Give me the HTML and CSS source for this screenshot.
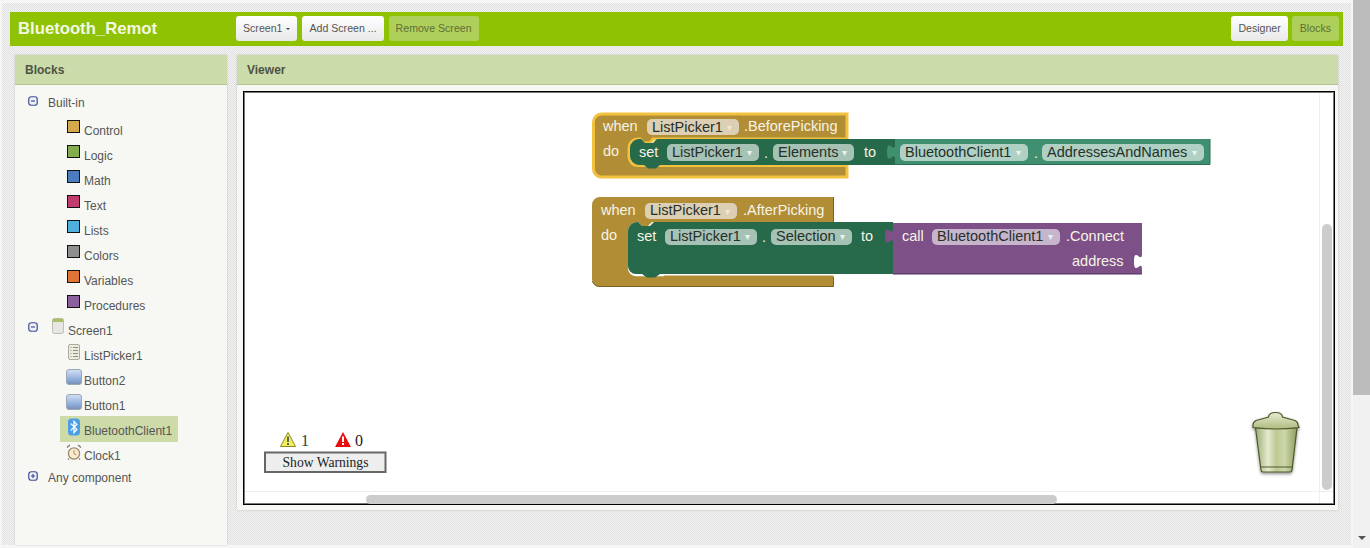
FILE: index.html
```html
<!DOCTYPE html>
<html lang="en">
<head>
<meta charset="UTF-8" />
<title>Bluetooth_Remot - Blocks</title>
<link rel="stylesheet" href="styles.css">
</head>
<body>
<div class="app">
<div class="page">
  <div class="topbar">
    <div class="project">Bluetooth_Remot</div>
    <div class="btn-group">
      <div class="btn">Screen1<span class="caret"></span></div>
      <div class="btn">Add Screen ...</div>
      <div class="btn btn-off">Remove Screen</div>
    </div>
    <div class="btn-group view-switch">
      <div class="btn">Designer</div>
      <div class="btn btn-off btn-blocks">Blocks</div>
    </div>
  </div>

  <div class="workarea">
    <div class="panel tree-panel">
      <div class="panel-head">Blocks</div>
      <div class="tree">
        <div class="row row-top">
          <svg class="toggle" viewBox="0 0 10 10"><rect x="0.75" y="0.75" width="8.5" height="8.5" rx="2.5"/><path d="M3 5h4"/></svg>
          <span>Built-in</span>
        </div>
        <div class="row row-first row-child"><i class="swatch s-control"></i><span>Control</span></div>
        <div class="row row-child"><i class="swatch s-logic"></i><span>Logic</span></div>
        <div class="row row-child"><i class="swatch s-math"></i><span>Math</span></div>
        <div class="row row-child"><i class="swatch s-text"></i><span>Text</span></div>
        <div class="row row-child"><i class="swatch s-lists"></i><span>Lists</span></div>
        <div class="row row-child"><i class="swatch s-colors"></i><span>Colors</span></div>
        <div class="row row-child"><i class="swatch s-variables"></i><span>Variables</span></div>
        <div class="row row-child"><i class="swatch s-procedures"></i><span>Procedures</span></div>
        <div class="row row-screen">
          <svg class="toggle" viewBox="0 0 10 10"><rect x="0.75" y="0.75" width="8.5" height="8.5" rx="2.5"/><path d="M3 5h4"/></svg>
          <svg class="icon-screen" width="12" height="16" viewBox="0 0 12 16">
            <rect x="0.5" y="0.5" width="11" height="15" rx="2" fill="#e6e6e2" stroke="#bdbdb6"/>
            <path d="M0.5 4V2.5a2 2 0 0 1 2-2h7a2 2 0 0 1 2 2V4z" fill="#a9bf6c"/>
          </svg>
          <span>Screen1</span>
        </div>
        <div class="row row-child">
          <svg class="icon" width="16" height="16" viewBox="0 0 16 16">
            <rect x="2.5" y="0.5" width="11" height="15" rx="1.5" fill="#ecebdf" stroke="#a9a99c"/>
            <path d="M4.5 3.5h1M4.5 6.5h1M4.5 9.5h1M4.5 12.5h1" stroke="#8aa05c"/>
            <path d="M7 3.5h5M7 6.5h5M7 9.5h5M7 12.5h5" stroke="#8f8f86"/>
          </svg>
          <span>ListPicker1</span>
        </div>
        <div class="row row-child">
          <svg class="icon" width="16" height="16" viewBox="0 0 16 16"><use href="#btn-icon"/></svg>
          <span>Button2</span>
        </div>
        <div class="row row-child">
          <svg class="icon" width="16" height="16" viewBox="0 0 16 16">
            <defs>
              <linearGradient id="btn-fill" x1="0" y1="0" x2="0" y2="1">
                <stop offset="0" stop-color="#d3e0f2"/><stop offset="0.75" stop-color="#86a6d6"/><stop offset="1" stop-color="#7d8ca6"/>
              </linearGradient>
              <g id="btn-icon"><rect x="0.5" y="0.5" width="15" height="15" rx="2.5" fill="url(#btn-fill)" stroke="#9aa7ba"/></g>
            </defs>
            <use href="#btn-icon"/>
          </svg>
          <span>Button1</span>
        </div>
        <div class="row row-child row-selected">
          <svg class="icon" width="16" height="18" viewBox="0 0 16 18">
            <rect x="2" y="0.5" width="12" height="17" rx="3.5" fill="#4a9fe6"/>
            <path d="M4.8 5.6 10.8 11.6 8 14.6V3.4L10.8 6.4 4.8 12.4" fill="none" stroke="#fff" stroke-width="1.3"/>
          </svg>
          <span>BluetoothClient1</span>
        </div>
        <div class="row row-child">
          <svg class="icon" width="16" height="16" viewBox="0 0 16 16">
            <circle cx="8" cy="9.5" r="5.6" fill="#f6ecd4" stroke="#9c8a66" stroke-width="1.3"/>
            <path d="M8 6.2v3.5l2.4 1.2" fill="none" stroke="#c08a3e"/>
            <path d="M1 3.4 4 1M15 3.4 12 1M3 14.5l-1 1M13 14.5l1 1" stroke="#777" stroke-width="1.3" fill="none"/>
          </svg>
          <span>Clock1</span>
        </div>
        <div class="row row-any">
          <svg class="toggle" viewBox="0 0 10 10"><rect x="0.75" y="0.75" width="8.5" height="8.5" rx="2.5"/><path d="M3 5h4M5 3v4"/></svg>
          <span>Any component</span>
        </div>
      </div>
    </div>

    <div class="panel viewer">
      <div class="panel-head">Viewer</div>
      <div class="viewer-body">
        <!-- viewBox is in page coordinates so the block numbers read off the screen directly -->
        <svg class="workspace" width="1090" height="412" viewBox="244 92 1090 412">
          <defs>
            <linearGradient id="can" x1="0" y1="0" x2="1" y2="0">
              <stop offset="0" stop-color="#9dab72"/><stop offset="0.3" stop-color="#e4ead0"/><stop offset="0.5" stop-color="#bcc993"/><stop offset="0.7" stop-color="#ccd7aa"/><stop offset="1" stop-color="#8d9c5e"/>
            </linearGradient>
            <linearGradient id="lid" x1="0" y1="0" x2="0" y2="1">
              <stop offset="0" stop-color="#e6edd2"/><stop offset="1" stop-color="#aebb80"/>
            </linearGradient>
            <filter id="soft" x="-20%" y="-20%" width="140%" height="140%"><feDropShadow dx="0" dy="1.5" stdDeviation="1.5" flood-color="#000" flood-opacity="0.45"/></filter>
          </defs>

          <!-- when ListPicker1.BeforePicking -->
          <path class="b-event b-selected" d="M593.5 122a8 8 0 0 1 8-8H847V139H653l-3 4h-7l-3-4h-2a9 9 0 0 0-9 9V156a9 9 0 0 0 9 9.500H847V177H601.500a8 8 0 0 1-8-8Z"/>
          <text class="t-light" x="603" y="131">when</text>
          <rect class="f-event" x="647" y="119" width="92" height="16" rx="5"/>
          <text class="t-field" x="652" y="131.500">ListPicker1</text>
          <text class="t-arrow a-event" x="727" y="131">▾</text>
          <text class="t-light" x="744" y="131">.BeforePicking</text>
          <text class="t-light" x="603" y="156">do</text>

          <path class="b-set" d="M630 148a9 9 0 0 1 9-9h2l4 4h8l4-4H895V165H660l-4 3.500h-8l-4-3.500H639a9 9 0 0 1-9-9Z"/>
          <text class="t-light" x="639" y="157">set</text>
          <rect class="f-set" x="667" y="144" width="92" height="17" rx="5"/>
          <text class="t-field" x="672" y="157">ListPicker1</text>
          <text class="t-arrow" x="747" y="156">▾</text>
          <text class="t-light" x="764" y="158">.</text>
          <rect class="f-set" x="773" y="144" width="81" height="17" rx="5"/>
          <text class="t-field" x="778" y="157">Elements</text>
          <text class="t-arrow" x="842" y="156">▾</text>
          <text class="t-light" x="864" y="157">to</text>

          <path class="b-value" d="M895 139H1210V165H895V159.500c0-10-8 8-8-7.500s8 2.500 8-7.500Z"/>
          <path class="edge-value" d="M895 164.500H1210V139"/>
          <rect class="f-value" x="900" y="144" width="128" height="17" rx="5"/>
          <text class="t-field" x="905" y="157">BluetoothClient1</text>
          <text class="t-arrow" x="1016" y="156">▾</text>
          <text class="t-light" x="1034" y="158">.</text>
          <rect class="f-value" x="1042" y="144" width="162" height="17" rx="5"/>
          <text class="t-field" x="1047" y="157">AddressesAndNames</text>
          <text class="t-arrow" x="1192" y="156">▾</text>

          <!-- when ListPicker1.AfterPicking -->
          <path class="b-event" d="M592 205a8 8 0 0 1 8-8H833.500V222H652l-4 4h-6l-4-4H637a9 9 0 0 0-9 9V267.500a8 8 0 0 0 8 8H833.500V287H600a8 8 0 0 1-8-8Z"/>
          <path class="edge-event" d="M592.500 281q1 5.500 8 5.500H833.500V277M833.500 222V197"/>
          <text class="t-light" x="601" y="215">when</text>
          <rect class="f-event" x="645" y="203" width="92" height="16" rx="5"/>
          <text class="t-field" x="650" y="215">ListPicker1</text>
          <text class="t-arrow a-event" x="725" y="215">▾</text>
          <text class="t-light" x="743" y="215">.AfterPicking</text>
          <text class="t-light" x="601" y="240">do</text>

          <path class="gap" d="M628.500 268a8 8 0 0 0 8 7.500H664"/>
          <path class="b-set" d="M628 231a9 9 0 0 1 9-9h1l4 4h8l4-4H893V274H660l-5 3.500h-8l-5-3.500H636a8 8 0 0 1-8-8Z"/>
          <text class="t-light" x="637" y="241">set</text>
          <rect class="f-set" x="665" y="229" width="92" height="16" rx="5"/>
          <text class="t-field" x="670" y="241">ListPicker1</text>
          <text class="t-arrow" x="745" y="240">▾</text>
          <text class="t-light" x="762" y="242">.</text>
          <rect class="f-set" x="771" y="229" width="81" height="16" rx="5"/>
          <text class="t-field" x="776" y="241">Selection</text>
          <text class="t-arrow" x="840" y="240">▾</text>
          <text class="t-light" x="861" y="241">to</text>

          <path class="b-call" d="M893 223H1142V274H893V243.500c0-10-8 8-8-7.500s8 2.500 8-7.500Z"/>
          <path class="edge-call" d="M893 274H1142"/>
          <text class="t-light" x="902" y="241">call</text>
          <rect class="f-call" x="932" y="229" width="128" height="16" rx="5"/>
          <text class="t-field" x="937" y="241">BluetoothClient1</text>
          <text class="t-arrow" x="1048" y="240">▾</text>
          <text class="t-light" x="1066" y="241">.Connect</text>
          <text class="t-light" x="1072" y="266">address</text>
          <path class="socket" d="M1142 254c0 10-8-8-8 7.500s8-2.500 8 7.500Z"/>

          <!-- warnings -->
          <path class="warn-yellow" d="M288 432.500 280.500 446.500H295.500Z"/>
          <path class="warn-mark" d="M288 436.500v5.500M288 443v2"/>
          <text class="warn-count c-yellow" x="301" y="446">1</text>
          <path class="warn-red" d="M343 432 335 447H351Z"/>
          <path class="warn-mark-red" d="M343 436.500v5.500M343 443v2"/>
          <text class="warn-count" x="355" y="446">0</text>
          <rect class="warn-btn" x="265" y="452.500" width="120.500" height="19.500"/>
          <text class="warn-label" x="325.500" y="467">Show Warnings</text>

          <!-- trash -->
          <g filter="url(#soft)">
            <path d="M1255.500 428 1261 470q.2 2 2 2H1290q1.800 0 2-2L1297 428Z" fill="url(#can)" stroke="#4d5a2a" stroke-width="1.200"/>
            <path d="M1261 467H1292" stroke="#4d5a2a" fill="none"/>
            <path d="M1253 425q0-3 3-4.500L1268.500 417q.5-4.500 7-4.500t7 4.500L1295 420.500q3 1.500 3 4.500l1 2.500q-23 3-46 0Z" fill="url(#lid)" stroke="#4d5a2a" stroke-width="1.200"/>
          </g>

          <!-- scrollbars -->
          <path class="track" d="M245 491.500H1333M1319.500 93V503"/>
          <rect class="thumb" x="366" y="495" width="691" height="9" rx="4.500"/>
          <rect class="thumb" x="1322" y="224" width="10" height="266" rx="5"/>
        </svg>
      </div>
    </div>
  </div>
</div>
<div class="page-scroll">
  <div class="page-thumb"></div>
  <div class="page-arrow"></div>
</div>
</div>
</body>
</html>
```

FILE: styles.css
```css
body {
  margin: 0;
  background-color: #f6f6f6;
  font-family: "Liberation Sans", Arial, sans-serif;
  font-size: 12px;
  color: #555;
  overflow: hidden;
}
.app {
  display: flex;
  height: 548px;
}
.page {
  width: 1334px;
  height: 533px;
  margin: 3px 0 0 2px;
  padding: 9px 7px 0 8px;
  flex: none;
  background-color: #e9e9e9;
  background-image: repeating-conic-gradient(#e0e0e0 0 25%, #f4f4f4 0 50%);
  background-size: 2px 2px;
}

/* top bar */
.topbar {
  display: flex;
  align-items: center;
  height: 34px;
  width: 1333px;
  background-color: #8fc202;
}
.project {
  width: 226px;
  padding-left: 8px;
  box-sizing: border-box;
  font-size: 16.7px;
  font-weight: bold;
  color: #f3f8e4;
}
.btn-group {
  display: flex;
  gap: 5px;
  margin-top: -1px;
}
.view-switch {
  margin-left: auto;
  margin-right: 4px;
  gap: 4px;
}
.btn {
  height: 25px;
  line-height: 25px;
  padding: 0 7px;
  border-radius: 3px;
  font-size: 10.6px;
  color: #555;
  background: linear-gradient(#ffffff, #e8e8e8);
}
.btn-off {
  background: #aed05a;
  color: #5d6f38;
}
.btn-blocks {
  padding: 0 8px;
}
.caret {
  display: inline-block;
  margin-left: 4px;
  vertical-align: 2px;
  border-left: 2px solid transparent;
  border-right: 2px solid transparent;
  border-top: 2.500px solid #444;
}

/* panels */
.workarea {
  display: flex;
  gap: 10px;
  align-items: flex-start;
  margin: 9px 0 0 5px;
}
.panel {
  background-color: #f7f8f3;
  box-shadow: 0 0 2px rgba(0,0,0,0.18);
}
.tree-panel {
  width: 212px;
  height: 490px;
}
.viewer {
  width: 1101px;
  height: 455px;
}
.panel-head {
  height: 29px;
  line-height: 30px;
  padding-left: 10px;
  border-bottom: 1px solid #b5c294;
  background-color: #ccdbaa;
  font-weight: bold;
  color: #4c5344;
}
.viewer-body {
  padding: 6px 3px 0 6px;
}
.workspace {
  display: block;
  border: 1px solid #000;
  background-color: #fff;
  box-shadow: inset 0 0 0 1px #777;
}

/* tree */
.tree {
  padding-left: 13px;
}
.row {
  display: flex;
  align-items: flex-end;
  height: 25px;
}
.row span {
  line-height: 14px;
}
.row-top {
  height: 15px;
  margin-top: 10px;
}
.row-first {
  margin-top: 3px;
}
.row-any {
  height: 22px;
}
.row-child {
  margin-left: 39px;
  width: max-content;
}
.row-screen span {
  margin-left: 4px;
}
.toggle {
  width: 10px;
  height: 10px;
  margin: 0 10px 5px 0;
  fill: #eef0f6;
  stroke: #3f4f96;
  stroke-width: 1.200;
}
.row-top .toggle,
.row-any .toggle {
  margin-bottom: 4px;
}
.row-screen .toggle {
  margin-bottom: 6px;
  margin-right: 14px;
}
.icon-screen {
  margin-bottom: 4px;
}
.swatch {
  display: block;
  width: 11px;
  height: 11px;
  margin-bottom: 5px;
  margin-right: 4px;
  border: 1px solid #111;
}
.row .icon {
  margin: 0 2px 3px -1px;
}
.row-selected {
  margin: 3px -4px -4px 32px;
  padding: 0 6px 0 7px;
  height: 26px;
  background-color: #cddba8;
}
.row-selected span {
  padding-bottom: 4px;
}
.row-selected .icon {
  margin-bottom: 6px;
}
.s-control { background-color: #d4a94a; }
.s-logic { background-color: #84ad4d; }
.s-math { background-color: #4a7cbe; }
.s-text { background-color: #c33c6e; }
.s-lists { background-color: #4fb0dd; }
.s-colors { background-color: #8e8e8e; }
.s-variables { background-color: #de7535; }
.s-procedures { background-color: #8c5f9e; }

/* blocks */
.b-event { fill: #b18e35; }
.b-selected { stroke: #f2c23e; stroke-width: 3; }
.b-set { fill: #26694b; }
.b-value { fill: #3f8f70; }
.b-call { fill: #7d5088; }
.edge-value { fill: none; stroke: #2e6e55; }
.edge-event { fill: none; stroke: #7a6222; }
.edge-call { fill: none; stroke: #4f3158; }
.gap { fill: none; stroke: #fff; stroke-width: 1.500; }
.socket { fill: #fff; }
.workspace text {
  font-family: "Liberation Sans", Arial, sans-serif;
  font-size: 14.500px;
}
.t-light { fill: #f7f3e6; }
.t-field { fill: #26302a; }
.workspace .t-arrow { fill: #e8f2ec; font-size: 10px; }
.workspace .a-event { fill: #f1e8d2; }
.f-event { fill: #dccfb3; }
.f-set { fill: #a6c2b4; }
.f-value { fill: #afd0c3; }
.f-call { fill: #c7b5cc; }

/* warnings, scrollbars */
.warn-yellow { fill: #f0f060; stroke: #8c8c20; }
.warn-mark { stroke: #555; stroke-width: 1.800; fill: none; }
.warn-red { fill: #e80e0e; }
.warn-mark-red { stroke: #fff; stroke-width: 2; fill: none; }
.workspace .warn-count {
  font-family: "Liberation Serif", serif;
  font-size: 16px;
  fill: #222;
}
.workspace .c-yellow { fill: #1d4a44; }
.warn-btn { fill: #eeeeee; stroke: #666; stroke-width: 2; }
.workspace .warn-label {
  font-family: "Liberation Serif", serif;
  font-size: 13.600px;
  fill: #222;
  text-anchor: middle;
}
.track { fill: none; stroke: #eeeeee; }
.thumb { fill: #cccccc; }

/* browser scrollbar of the page */
.page-scroll {
  display: flex;
  flex-direction: column;
  margin-left: 2px;
  width: 17px;
  background-color: #f1f1f1;
}
.page-thumb {
  height: 395px;
  background-color: #bcbcbc;
}
.page-arrow {
  margin: auto auto 8px;
  border-left: 4px solid transparent;
  border-right: 4px solid transparent;
  border-top: 4px solid #555;
}
```
